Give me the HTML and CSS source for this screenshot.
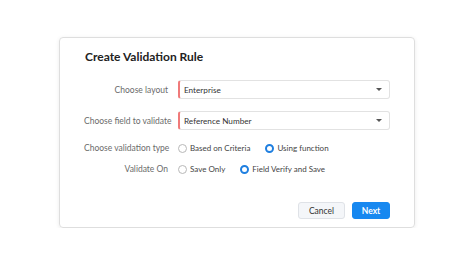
FILE: index.html
```html
<!DOCTYPE html>
<html lang="en">
<head>
    <meta charset="UTF-8">
    <meta name="viewport" content="width=device-width, initial-scale=1.0">
    <title>Create Validation Rule</title>
    <link rel="stylesheet" href="styles.css">
</head>
<body>
    <div class="card">
        <h1>Create Validation Rule</h1>
        <div class="row row-select first">
            <label>Choose layout</label>
            <div class="select"><span>Enterprise</span><span class="arrow"></span></div>
        </div>
        <div class="row row-select">
            <label>Choose field to validate</label>
            <div class="select"><span>Reference Number</span><span class="arrow"></span></div>
        </div>
        <div class="row row-radio type">
            <label>Choose validation type</label>
            <div class="options">
                <span class="option"><span class="radio"></span>Based on Criteria</span>
                <span class="option"><span class="radio checked"></span>Using function</span>
            </div>
        </div>
        <div class="row row-radio on">
            <label>Validate On</label>
            <div class="options">
                <span class="option"><span class="radio"></span>Save Only</span>
                <span class="option"><span class="radio checked"></span>Field Verify and Save</span>
            </div>
        </div>
        <div class="actions">
            <button class="btn cancel">Cancel</button>
            <button class="btn next">Next</button>
        </div>
    </div>
</body>
</html>
```

FILE: styles.css
```css
* {
    margin: 0;
    padding: 0;
    box-sizing: border-box;
}
body {
    background: #ffffff;
    font-family: Lato, "Open Sans", sans-serif;
    color: #333;
}
.card {
    margin: 37px 0 0 59px;
    width: 356px;
    height: 191px;
    border: 1px solid #dedede;
    border-radius: 4px;
    box-shadow: 0 1px 4px rgba(0, 0, 0, 0.08);
    padding: 12px 24px 0 24px;
    display: flex;
    flex-direction: column;
}
.card h1 {
    font-size: 12px;
    font-weight: 700;
    line-height: 14px;
    color: #222;
    margin-left: 1px;
}
.row {
    display: flex;
    align-items: center;
}
.row label {
    width: 84px;
    margin-right: 10px;
    text-align: right;
    font-size: 8.5px;
    color: #6b6b6b;
    white-space: nowrap;
}
.row-select {
    height: 19px;
    margin-top: 12px;
}
.row-select.first {
    margin-top: 16px;
}
.select {
    flex: 1;
    height: 19px;
    border: 1px solid #e2e2e2;
    border-left: 2px solid #f07a7a;
    border-radius: 3px;
    display: flex;
    align-items: center;
    justify-content: space-between;
    padding: 0 7px 0 4px;
    font-size: 8.2px;
    color: #333;
}
.arrow {
    width: 0;
    height: 0;
    border-left: 3px solid transparent;
    border-right: 3px solid transparent;
    border-top: 3px solid #555;
}
.row-radio {
    height: 14px;
}
.row-radio.type {
    margin-top: 11px;
}
.row-radio.on {
    margin-top: 7px;
}
.options {
    display: flex;
    align-items: center;
}
.option {
    display: flex;
    align-items: center;
    font-size: 8px;
    color: #444;
}
.option:first-child {
    margin-right: 15px;
}
.radio {
    width: 9px;
    height: 9px;
    border: 1px solid #b8b8b8;
    border-radius: 50%;
    margin-right: 3px;
    background: #fff;
}
.radio.checked {
    border: 2.5px solid #1f7fe0;
}
.actions {
    display: flex;
    justify-content: flex-end;
    gap: 7px;
    margin-top: 26px;
}
.btn {
    height: 17px;
    font-family: Lato, "Open Sans", sans-serif;
    font-size: 8.5px;
    border-radius: 3px;
    cursor: pointer;
}
.cancel {
    width: 47px;
    background: #f4f6f9;
    border: 1px solid #dfe2e7;
    color: #333;
}
.next {
    width: 38px;
    background: #1788f0;
    border: 1px solid #1788f0;
    color: #fff;
    font-weight: 700;
}
```
